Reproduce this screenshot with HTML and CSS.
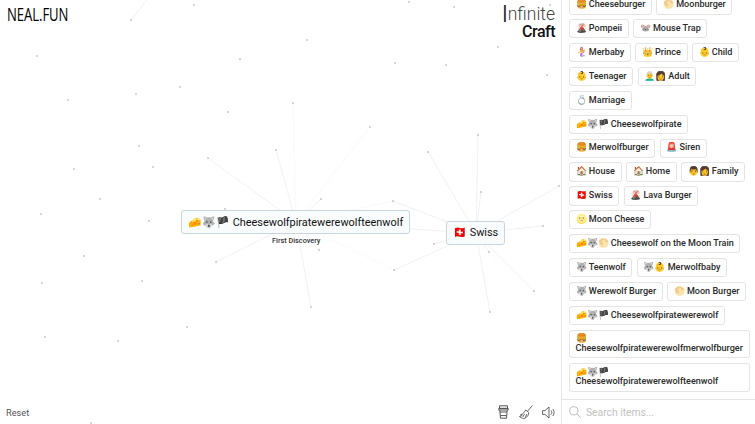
FILE: index.html
```html
<!DOCTYPE html>
<html lang="en">
<head>
  <meta charset="UTF-8">
  <meta name="viewport" content="width=device-width, initial-scale=1.0">
  <title>Infinite Craft</title>
  <link rel="stylesheet" href="styles.css">
</head>
<body>
  <div class="app">
    <!-- Canvas -->
    <main class="canvas">
      <svg class="particles" width="562" height="424" viewBox="0 0 562 424">
        <g class="links">
          <line x1="131" y1="20" x2="147" y2="0"/>
          <line x1="296" y1="222" x2="208" y2="158"/>
          <line x1="296" y1="222" x2="276" y2="150"/>
          <line x1="296" y1="222" x2="321" y2="199"/>
          <line x1="296" y1="222" x2="216" y2="262"/>
          <line x1="296" y1="222" x2="319" y2="250"/>
          <line x1="296" y1="222" x2="311" y2="307"/>
          <line x1="296" y1="222" x2="476" y2="233"/>
          <line class="far" x1="296" y1="222" x2="293" y2="103"/>
          <line class="far" x1="296" y1="222" x2="370" y2="127"/>
          <line class="far" x1="296" y1="222" x2="393" y2="201"/>
          <line class="far" x1="296" y1="222" x2="394" y2="270"/>
          <line x1="476" y1="233" x2="393" y2="201"/>
          <line x1="476" y1="233" x2="394" y2="270"/>
          <line x1="476" y1="233" x2="434" y2="244"/>
          <line x1="476" y1="233" x2="428" y2="152"/>
          <line x1="476" y1="233" x2="478" y2="135"/>
          <line x1="476" y1="233" x2="481" y2="192"/>
          <line x1="476" y1="233" x2="559" y2="186"/>
          <line x1="476" y1="233" x2="543" y2="226"/>
          <line x1="476" y1="233" x2="534" y2="291"/>
          <line x1="476" y1="233" x2="490" y2="312"/>
          <line x1="476" y1="233" x2="489" y2="252"/>
        </g>
        <g class="dots">
          <circle cx="131" cy="20" r=".8"/><circle cx="194" cy="5" r=".8"/><circle cx="37" cy="56" r=".8"/>
          <circle cx="240" cy="59" r=".8"/><circle cx="180" cy="87" r=".8"/><circle cx="136" cy="94" r=".8"/>
          <circle cx="68" cy="100" r=".8"/><circle cx="228" cy="112" r=".8"/><circle cx="139" cy="146" r=".8"/>
          <circle cx="74" cy="169" r=".8"/><circle cx="153" cy="167" r=".8"/><circle cx="208" cy="158" r=".8"/>
          <circle cx="276" cy="150" r=".8"/><circle cx="100" cy="199" r=".8"/><circle cx="41" cy="214" r=".8"/>
          <circle cx="149" cy="221" r=".8"/><circle cx="84" cy="256" r=".8"/><circle cx="42" cy="283" r=".8"/>
          <circle cx="142" cy="281" r=".8"/><circle cx="45" cy="337" r=".8"/><circle cx="118" cy="341" r=".8"/>
          <circle cx="187" cy="327" r=".8"/><circle cx="216" cy="262" r=".8"/><circle cx="91" cy="423" r=".8"/>
          <circle cx="225" cy="209" r=".8"/><circle cx="321" cy="199" r=".8"/><circle cx="393" cy="201" r=".8"/>
          <circle cx="428" cy="152" r=".8"/><circle cx="478" cy="135" r=".8"/><circle cx="481" cy="192" r=".8"/>
          <circle cx="434" cy="244" r=".8"/><circle cx="489" cy="252" r=".8"/><circle cx="319" cy="250" r=".8"/>
          <circle cx="394" cy="270" r=".8"/><circle cx="311" cy="307" r=".8"/><circle cx="490" cy="312" r=".8"/>
          <circle cx="559" cy="186" r=".8"/><circle cx="543" cy="226" r=".8"/><circle cx="534" cy="291" r=".8"/>
          <circle cx="498" cy="47" r=".8"/><circle cx="547" cy="75" r=".8"/><circle cx="409" cy="2" r=".8"/>
          <circle cx="454" cy="7" r=".8"/><circle cx="550" cy="5" r=".8"/><circle cx="307" cy="40" r=".8"/>
          <circle cx="395" cy="63" r=".8"/><circle cx="446" cy="65" r=".8"/><circle cx="293" cy="103" r=".8"/>
          <circle cx="370" cy="127" r=".8"/>
        </g>
      </svg>

      <div class="top-bar">
        <div class="neal-logo"><span>NEAL.FUN</span></div>
        <div class="craft-logo">
          <div class="craft-infinite"><b>I</b>nfinite</div>
          <div class="craft-word">Craft</div>
        </div>
      </div>

      <div class="card card-main">🧀🐺🏴 Cheesewolfpiratewerewolfteenwolf</div>
      <div class="discovery">First Discovery</div>
      <div class="card card-swiss">🇨🇭 Swiss</div>

      <div class="bottom-bar">
        <span class="reset">Reset</span>
        <div class="tools">
          <svg width="13" height="14" viewBox="0 0 13 14" fill="none" stroke="#555" stroke-width="1">
            <path d="M2.5 .8h8v2.6h-8zM1.8 3.4h9.4v1.6H1.8zM2.8 5l.7 8.2h6l.7-8.2"/>
            <path d="M3 7h7M3.3 10.6h6.4"/>
          </svg>
          <svg width="14" height="14" viewBox="0 0 14 14" fill="none" stroke="#555" stroke-width=".9">
            <path d="M13.4 .5L8.6 6.2M6.7 4.9l3 2.6c.4 2-1.6 5.2-4.6 6-1 .2-2.2-.2-4.6-2 1.300-.2 2.300-.8 2.800-1.600-.7.2-1.300.2-1.800 0C4 9 5.600 7 6.700 4.900z"/>
            <path d="M5.600 8.800L3.800 12M7.800 9L6.400 12.400"/>
          </svg>
          <svg width="13" height="13" viewBox="0 0 13 13" fill="none" stroke="#555" stroke-width=".9">
            <path d="M.6 4.600h2.400L7 1v11L3 8.400H.6z"/>
            <path d="M9 4.400c1 1.200 1 3 0 4.200M10.800 3c1.700 2.100 1.700 4.900 0 7"/>
          </svg>
        </div>
      </div>
    </main>

    <!-- Sidebar -->
    <aside class="sidebar">
      <div class="items">
        <div class="item">🍔 Cheeseburger</div>
        <div class="item">🌕 Moonburger</div>
        <div class="item">🌋 Pompeii</div>
        <div class="item">🐭 Mouse Trap</div>
        <div class="item">🧜‍♀️ Merbaby</div>
        <div class="item">👑 Prince</div>
        <div class="item">👶 Child</div>
        <div class="item">👶 Teenager</div>
        <div class="item">👨‍🦳👩 Adult</div>
        <div class="item">💍 Marriage</div>
        <div class="item">🧀🐺🏴 Cheesewolfpirate</div>
        <div class="item">🍔 Merwolfburger</div>
        <div class="item">🚨 Siren</div>
        <div class="item">🏠 House</div>
        <div class="item">🏠 Home</div>
        <div class="item">👨👩 Family</div>
        <div class="item">🇨🇭 Swiss</div>
        <div class="item">🌋 Lava Burger</div>
        <div class="item">🌝 Moon Cheese</div>
        <div class="item">🧀🐺🌕 Cheesewolf on the Moon Train</div>
        <div class="item">🐺 Teenwolf</div>
        <div class="item">🐺👶 Merwolfbaby</div>
        <div class="item">🐺 Werewolf Burger</div>
        <div class="item">🌕 Moon Burger</div>
        <div class="item">🧀🐺🏴 Cheesewolfpiratewerewolf</div>
        <div class="item">🍔 Cheesewolfpiratewerewolfmerwolfburger</div>
        <div class="item">🧀🐺🏴 Cheesewolfpiratewerewolfteenwolf</div>
      </div>
      <div class="search">
        <svg width="12" height="12" viewBox="0 0 12 12" fill="none" stroke="#b5b5b5" stroke-width=".9">
          <circle cx="4.800" cy="4.800" r="4.100"/>
          <path d="M7.800 7.800l3.800 3.800"/>
        </svg>
        <span>Search items...</span>
      </div>
    </aside>
  </div>
</body>
</html>
```

FILE: styles.css
```css
/* General */
body {
  margin: 0;
  font-family: Roboto, "Noto Sans", sans-serif;
  font-weight: 500;
  color: #111;
  background-color: #fff;
  overflow: hidden;
}

.app {
  display: flex;
  width: 755px;
  height: 424px;
}

/* Canvas */
.canvas {
  position: relative;
  flex: 0 0 561px;
  height: 424px;
  display: flex;
  flex-direction: column;
  justify-content: space-between;
}

.particles {
  position: absolute;
  top: 0;
  left: 0;
}

.links line {
  stroke: #f0f1f4;
  stroke-width: 1;
}

.links line.far {
  stroke: #f9f9fb;
}

.dots circle {
  fill: #a2a2a2;
}

.top-bar {
  position: relative;
  display: flex;
  justify-content: space-between;
  padding: 5px 6px 0 7px;
}

.neal-logo {
  width: 62px;
  height: 20px;
  margin-top: -1px;
}

.neal-logo span {
  display: block;
  width: 88px;
  font-family: "Open Sans", sans-serif;
  font-size: 19px;
  font-weight: 400;
  line-height: 20px;
  letter-spacing: -0.1px;
  white-space: nowrap;
  transform: scaleX(0.69);
  transform-origin: left center;
  color: #000;
}

.craft-logo {
  text-align: right;
}

.craft-infinite {
  height: 19px;
  font-size: 17.500px;
  font-weight: 300;
  line-height: 19px;
  color: #444;
}

.craft-infinite b {
  display: inline-block;
  margin-right: 0.500px;
  font-size: 17.500px;
  font-weight: 400;
  line-height: 13px;
  color: #222;
  transform: scaleY(1.35);
}

.craft-word {
  font-size: 16px;
  font-weight: 500;
  line-height: 15px;
  letter-spacing: -0.500px;
  color: #111;
}

/* Placed elements */
.card {
  position: absolute;
  display: flex;
  align-items: center;
  height: 24px;
  box-sizing: border-box;
  padding: 0 6px;
  font-size: 10.900px;
  font-weight: 400;
  white-space: pre;
  background-color: #f9fcfd;
  border: 1px solid #c8d5df;
  border-radius: 3px;
}

.card-main {
  left: 181px;
  top: 210px;
  width: 229px;
}

.card-swiss {
  left: 446px;
  top: 220.500px;
  width: 59px;
}

.discovery {
  position: absolute;
  left: 272px;
  top: 236px;
  font-size: 7.300px;
  line-height: 9px;
  color: #333;
}

.bottom-bar {
  position: relative;
  display: flex;
  justify-content: space-between;
  align-items: center;
  padding: 0 6px 5px 6px;
}

.reset {
  font-size: 9.200px;
  font-weight: 400;
  color: #555;
}

.tools {
  display: flex;
  align-items: center;
  gap: 9px;
}

/* Sidebar */
.sidebar {
  flex: 1;
  display: flex;
  flex-direction: column;
  height: 424px;
  box-sizing: border-box;
  border-left: 1px solid #e4e4e4;
  overflow: hidden;
}

.items {
  flex: 1;
  min-height: 0;
  overflow: hidden;
  display: flex;
  flex-wrap: wrap;
  align-content: flex-start;
  gap: 4.700px 4.400px;
  margin-top: -4.700px;
  padding: 0 5px 0 7px;
}

.item {
  box-sizing: border-box;
  max-width: 100%;
  padding: 3.850px 5.600px;
  font-size: 9.050px;
  line-height: 9.500px;
  color: #2a2a2a;
  background-color: #fff;
  border: 1px solid #e4e4e4;
  border-radius: 3px;
}

.search {
  flex: 0 0 24px;
  display: flex;
  align-items: center;
  gap: 5px;
  padding-left: 7px;
  border-top: 1px solid #e4e4e4;
  font-size: 10.300px;
  font-weight: 400;
  color: #c2c2c2;
}
```
